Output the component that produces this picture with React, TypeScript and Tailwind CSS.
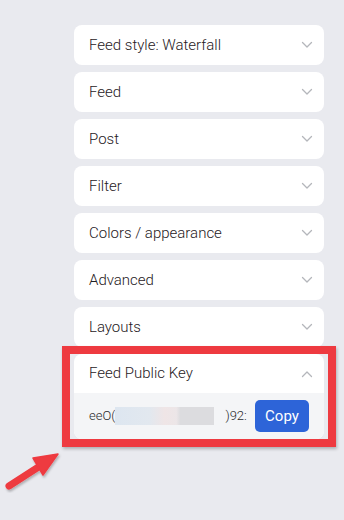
import React from "react";

const Chevron = ({ up = false }: { up?: boolean }) => (
  <svg width="12" height="8" viewBox="0 0 12 8" className="shrink-0">
    <path
      d={up ? "M1.5 6.5 L6 2 L10.5 6.5" : "M1.5 1.5 L6 6 L10.5 1.5"}
      fill="none"
      stroke="#b4b6bb"
      strokeWidth="1.3"
      strokeLinecap="round"
      strokeLinejoin="round"
    />
  </svg>
);

const items = [
  "Feed style: Waterfall",
  "Feed",
  "Post",
  "Filter",
  "Colors / appearance",
  "Advanced",
  "Layouts",
];

export default function App() {
  return (
    <div
      className="relative w-[344px] h-[520px] bg-[#e9eaef] overflow-hidden text-[#1f2023]"
      style={{ fontFamily: "Roboto, 'Liberation Sans', sans-serif" }}
    >
      <div className="flex flex-col gap-[7px] pt-[25px] pl-[74px] w-[324px]">
        {items.map((t) => (
          <div
            key={t}
            className="h-[40px] bg-white rounded-[8px] flex items-center justify-between pl-[15px] pr-[11px]"
          >
            <span className="text-[15px] font-light">{t}</span>
            <Chevron />
          </div>
        ))}
        <div className="bg-white rounded-[8px] overflow-hidden">
          <div className="h-[39px] flex items-center justify-between pl-[15px] pr-[11px]">
            <span className="text-[15px] font-light">Feed Public Key</span>
            <Chevron up />
          </div>
          <div className="bg-[#f4f5f7] h-[46px] flex items-center pl-[15px] pr-[15px]">
            <div className="flex items-center w-[158px] text-[13px] font-light text-[#2a2b2e]">
              <span className="whitespace-nowrap">eeO(</span>
              <div className="w-[99px] h-[18px] shrink-0 bg-[linear-gradient(90deg,#dde6f0_0%,#e2e8ef_35%,#efe5e6_50%,#ece6e8_62%,#dcdcdf_66%,#dcdcdf_100%)]" />
              <div className="w-[11px] shrink-0" />
              <span className="whitespace-nowrap">)92:</span>
            </div>
            <button className="ml-[8px] h-[32px] w-[54px] rounded-[5px] bg-[#2d64d8] text-white text-[15px] flex items-center justify-center">
              Copy
            </button>
          </div>
        </div>
      </div>

      {/* red highlight box */}
      <div className="absolute left-[62px] top-[346px] w-[274px] h-[101px] border-[8px] border-[#ee3a40] shadow-[1px_2px_3px_rgba(0,0,0,0.25)] pointer-events-none" />

      {/* arrow */}
      <svg className="absolute left-0 top-0" width="344" height="520" viewBox="0 0 344 520">
        <defs>
          <filter id="sh" x="-20%" y="-20%" width="140%" height="140%">
            <feDropShadow dx="1" dy="2" stdDeviation="1.2" floodColor="#000" floodOpacity="0.25" />
          </filter>
        </defs>
        <g filter="url(#sh)">
          <line x1="9" y1="486" x2="40" y2="466" stroke="#ee3a40" strokeWidth="7" strokeLinecap="round" />
          <polygon points="58,454 33,458 43,475" fill="#ee3a40" stroke="#ee3a40" strokeWidth="1.5" strokeLinejoin="round" />
        </g>
      </svg>
    </div>
  );
}
